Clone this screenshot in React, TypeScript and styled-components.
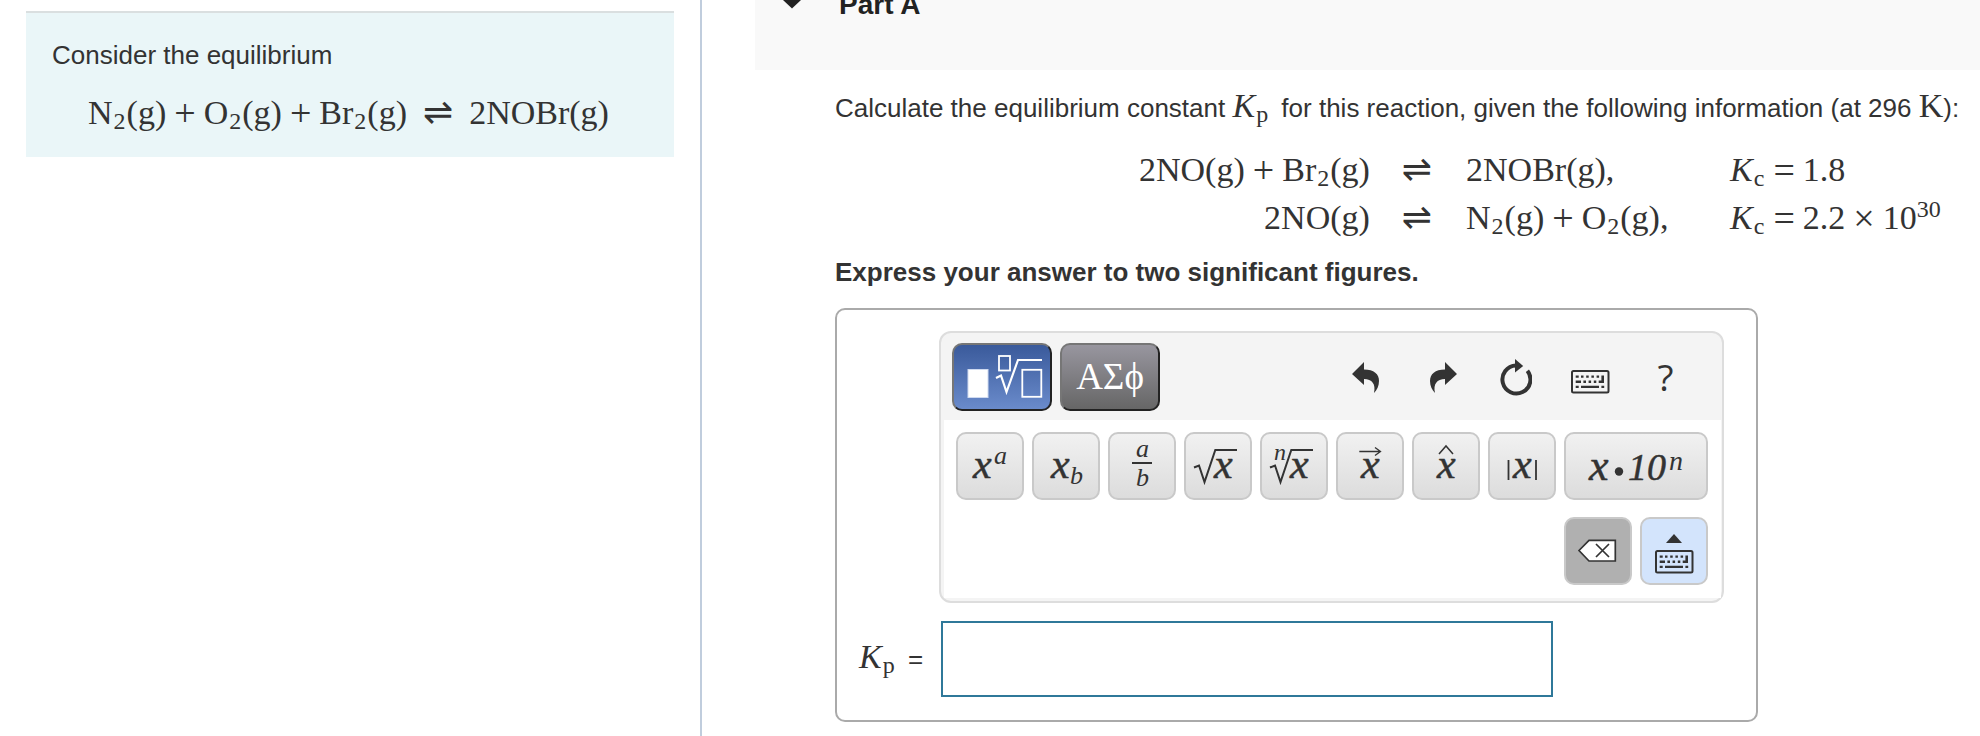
import React from "react";
import styled, { createGlobalStyle } from "styled-components";

const INK = "#333";
const SERIF = '"Liberation Serif", "Times New Roman", serif';

const GlobalStyle = createGlobalStyle`
  *, *::before, *::after { box-sizing: border-box; }
  body {
    margin: 0;
    background: #fff;
    color: ${INK};
    font-family: "Liberation Sans", Arial, sans-serif;
    font-size: 26px;
    line-height: 36px;
  }
  button { font: inherit; color: inherit; cursor: pointer; }
  p { margin: 0; }
  svg { display: block; }
`;

/* ---------- page structure ---------- */

const Page = styled.div`
  display: flex;
  min-height: 100vh;
`;

const Sidebar = styled.aside`
  flex: 0 0 702px;
  padding: 11px 26px 0;
  border-right: 2px solid #c0cddd;

  @media (max-width: 1600px) {
    flex-basis: 36%;
  }
`;

const ProblemCard = styled.section`
  background: #eaf6f8;
  border-top: 2px solid #dadfe0;
  padding: 24px 26px 20px;
`;

const ProblemEquation = styled.div`
  padding: 16px 0 0 36px;
`;

const Main = styled.main`
  flex: 1;
  min-width: 0;
  padding-left: 53px;
`;

const PartHeader = styled.header`
  display: flex;
  align-items: flex-start;
  gap: 38px;
  height: 70px;
  padding-left: 28px;
  overflow: hidden;
  background: #f9f9f9;
  color: #222;
`;

const PartTitle = styled.h2`
  margin: -13px 0 0;
  font-size: 28px;
  line-height: 36px;
`;

const PartBody = styled.div`
  padding: 18px 0 12px 80px;
`;

const Question = styled.p`
  line-height: 40px;
  white-space: nowrap;
`;

const Instruction = styled.p`
  padding: 12px 0 18px;
  font-weight: bold;
`;

/* ---------- formulas ---------- */

const Formula = styled.span`
  display: block;
  font-family: ${SERIF};
  font-size: 34px;
  line-height: 48px;
  white-space: nowrap;
`;

const InlineSymbol = styled.span`
  font-family: ${SERIF};
  font-size: 34px;
  line-height: 0;
`;

const KpSymbol = styled(InlineSymbol)`
  margin-right: 5px;
`;

const Sub = styled.sub`
  font-size: 24px;
  line-height: 0;
  vertical-align: -5px;
  margin: 0 1px;
`;

const Sup = styled.sup`
  font-size: 24px;
  line-height: 0;
  vertical-align: 12px;
`;

const Operator = styled.span`
  margin: 0 8px;
  font-size: 38px;
  line-height: 0;
  vertical-align: -2px;
`;

const Harpoons = styled.span`
  font-family: "DejaVu Sans", sans-serif;
  font-size: 36px;
  line-height: 0;
  margin: 0 16px;
`;

const Reactions = styled.table`
  margin: 18px 0 0 304px;
  border-collapse: collapse;

  td { padding: 0; }
  td:first-child { text-align: right; }
  td:nth-child(2) { padding: 0 18px 0 16px; }
  td:nth-child(3) { min-width: 264px; }
`;

/* ---------- answer area ---------- */

const AnswerBox = styled.form`
  max-width: 923px;
  padding: 21px 32px 23px 0;
  border: 2px solid #aaa;
  border-radius: 10px;
`;

const Editor = styled.div`
  margin-left: 102px;
  padding: 0 1px 3px 3px;
  border: 2px solid #ddd;
  border-radius: 12px;
  background: #f4f4f4;
`;

const EditorBar = styled.div`
  display: flex;
  justify-content: space-between;
  height: 87px;
  padding: 10px 18px 9px 8px;
`;

const Group = styled.div`
  display: flex;
  gap: 8px;
`;

const Palette = styled.button<{ $active?: boolean }>`
  display: flex;
  align-items: center;
  justify-content: center;
  width: 100px;
  height: 68px;
  padding: 0;
  border: 2px solid;
  border-color: #767676 #222 #222 #767676;
  border-radius: 10px;
  color: #fff;
  font-family: ${SERIF};
  font-size: 37px;
  background: ${(p) =>
    p.$active
      ? "linear-gradient(#3a5a9b, #6a8bcb)"
      : "linear-gradient(#98969f, #666)"};
`;

const Tools = styled.div`
  display: flex;
`;

const Tool = styled.button`
  display: flex;
  align-items: center;
  justify-content: center;
  width: 75px;
  height: 68px;
  padding: 0;
  border: 0;
  background: none;
  font-family: "Open Sans", sans-serif;
  font-size: 37px;
`;

const KeyPad = styled.div`
  display: flex;
  flex-wrap: wrap;
  gap: 17px 8px;
  padding: 12px 13px 13px 12px;
  background: #fff;
`;

const KeyRow = styled.div<{ $end?: boolean }>`
  display: flex;
  gap: 8px;
  width: 100%;
  justify-content: ${(p) => (p.$end ? "flex-end" : "flex-start")};
`;

const keyFill = {
  plain: "linear-gradient(#f1f1f1, #dcdcdc)",
  erase: "#b0b0b0",
  toggle: "#d3e4fc",
};

const Key = styled.button<{ $wide?: boolean; $tone?: keyof typeof keyFill }>`
  flex: none;
  width: ${(p) => (p.$wide ? 144 : 68)}px;
  height: 68px;
  padding: 0;
  border: 2px solid #c9c9c9;
  border-radius: 10px;
  background: ${(p) => keyFill[p.$tone ?? "plain"]};
`;

const KeyArt = styled.svg`
  width: 100%;
  height: 64px;
  fill: ${INK};
  font-family: ${SERIF};
  font-style: italic;
`;

const AnswerRow = styled.div`
  display: flex;
  align-items: center;
  padding-top: 18px;
`;

const AnswerLabel = styled.label`
  width: 104px;
  padding-left: 22px;
  white-space: nowrap;
`;

const AnswerInput = styled.input`
  flex: 0 1 612px;
  min-width: 0;
  height: 76px;
  padding: 0 16px;
  border: 2px solid #2f7899;
  background: #fff;
  color: inherit;
  font: inherit;
  outline: none;
`;

/* ---------- symbols and icons ---------- */

const Kp = () => (
  <KpSymbol>
    <i>K</i>
    <Sub>p</Sub>
  </KpSymbol>
);

const Kc = () => (
  <>
    <i>K</i>
    <Sub>c</Sub>
  </>
);

const Plus = () => <Operator>+</Operator>;

const KeyboardShape = () => (
  <>
    <rect x="1" y="1" width="36.5" height="21.6" rx="1.5" fill="none" stroke={INK} strokeWidth="2" />
    <path
      fill={INK}
      d="M4.7 5.5h3v2.3h-3zM10 5.5h2.5v2.3H10zM15.2 5.5h2.5v2.3h-2.5zM20.4 5.5h2.5v2.3h-2.5zM25.6 5.5h2.5v2.3h-2.5zM30.4 5.5H33V13h-5.3v-2.4h2.7zM4.7 10.6H10V13H4.7zM12.4 10.6H15V13h-2.6zM17.6 10.6h2.5V13h-2.5zM22.8 10.6h2.5V13h-2.5zM4.7 15.7h3V18h-3zM10 15.7h18V18H10zM30.4 15.7h2.8V18h-2.8z"
    />
  </>
);

const ARROW = "M0 12L12 0V7.5C22 7.5 27 12 27 19C27 24 25 28 22 31C24 22 20 17 12 17V23Z";

const TemplateIcon = () => (
  <svg width="82" height="44" viewBox="-6 0 82 44" fill="none" stroke="#fff">
    <rect x="1" y="14.5" width="20" height="28" fill="#fff" stroke="#cfdaf0" />
    <rect x="32" y="1" width="11" height="14.5" strokeWidth="1.8" />
    <rect x="55.3" y="14.8" width="19" height="27" strokeWidth="1.8" />
    <path d="M29 23L34 20.5L39.5 37L51 5H75" strokeWidth="2.2" />
  </svg>
);

const X = ({ x }: { x: number }) => (
  <text x={x} y="44" fontSize="42" stroke={INK} strokeWidth="0.5">
    x
  </text>
);

const stroke = { fill: "none", stroke: INK, strokeWidth: 2 };

export default function App() {
  return (
    <Page>
      <GlobalStyle />
      <Sidebar>
        <ProblemCard>
          <p>Consider the equilibrium</p>
          <ProblemEquation>
            <Formula>
              N<Sub>2</Sub>(g)
              <Plus />O<Sub>2</Sub>(g)
              <Plus />
              Br<Sub>2</Sub>(g)
              <Harpoons>⇌</Harpoons>
              2NOBr(g)
            </Formula>
          </ProblemEquation>
        </ProblemCard>
      </Sidebar>

      <Main>
        <PartHeader>
          <svg width="18" height="9" viewBox="0 0 18 9" fill="#222">
            <path d="M0 0H18L9 8.5Z" />
          </svg>
          <PartTitle>Part A</PartTitle>
        </PartHeader>

        <PartBody>
          <Question>
            Calculate the equilibrium constant <Kp /> for this reaction, given the following
            information (at 296 <InlineSymbol>K</InlineSymbol>):
          </Question>

          <Reactions>
            <tbody>
              <tr>
                <td>
                  <Formula>
                    2NO(g)
                    <Plus />
                    Br<Sub>2</Sub>(g)
                  </Formula>
                </td>
                <td>
                  <Formula>
                    <Harpoons>⇌</Harpoons>
                  </Formula>
                </td>
                <td>
                  <Formula>2NOBr(g),</Formula>
                </td>
                <td>
                  <Formula>
                    <Kc />
                    <Operator>=</Operator>1.8
                  </Formula>
                </td>
              </tr>
              <tr>
                <td>
                  <Formula>2NO(g)</Formula>
                </td>
                <td>
                  <Formula>
                    <Harpoons>⇌</Harpoons>
                  </Formula>
                </td>
                <td>
                  <Formula>
                    N<Sub>2</Sub>(g)
                    <Plus />O<Sub>2</Sub>(g),
                  </Formula>
                </td>
                <td>
                  <Formula>
                    <Kc />
                    <Operator>=</Operator>2.2
                    <Operator>×</Operator>10<Sup>30</Sup>
                  </Formula>
                </td>
              </tr>
            </tbody>
          </Reactions>

          <Instruction>Express your answer to two significant figures.</Instruction>

          <AnswerBox onSubmit={(e) => e.preventDefault()}>
            <Editor>
              <EditorBar>
                <Group>
                  <Palette type="button" $active aria-label="Templates">
                    <TemplateIcon />
                  </Palette>
                  <Palette type="button">ΑΣϕ</Palette>
                </Group>
                <Tools>
                  <Tool type="button" aria-label="Undo">
                    <svg width="27" height="31" viewBox="0 0 27 31" fill={INK}>
                      <path d={ARROW} />
                    </svg>
                  </Tool>
                  <Tool type="button" aria-label="Redo">
                    <svg width="33" height="31" viewBox="-6 0 33 31" fill={INK}>
                      <path d={ARROW} transform="matrix(-1 0 0 1 27 0)" />
                    </svg>
                  </Tool>
                  <Tool type="button" aria-label="Reset">
                    <svg width="32" height="37" viewBox="0 0 32 37">
                      <path d="M27.4 11.8A14 14 0 1 1 16 6.5" fill="none" stroke={INK} strokeWidth="4" />
                      <path d="M15 0L23.2 7L15 13.5Z" fill={INK} />
                    </svg>
                  </Tool>
                  <Tool type="button" aria-label="Keyboard shortcuts">
                    <svg width="39" height="34" viewBox="0 -10 39 34">
                      <KeyboardShape />
                    </svg>
                  </Tool>
                  <Tool type="button">?</Tool>
                </Tools>
              </EditorBar>

              <KeyPad>
                <KeyRow>
                  <Key type="button" aria-label="Superscript">
                    <KeyArt>
                      <X x={15} />
                      <text x="36" y="30" fontSize="26">a</text>
                    </KeyArt>
                  </Key>
                  <Key type="button" aria-label="Subscript">
                    <KeyArt>
                      <X x={17} />
                      <text x="36" y="50" fontSize="26">b</text>
                    </KeyArt>
                  </Key>
                  <Key type="button" aria-label="Fraction">
                    <KeyArt>
                      <text x="26" y="23" fontSize="26">a</text>
                      <path d="M22 29H42" {...stroke} />
                      <text x="26" y="52" fontSize="26">b</text>
                    </KeyArt>
                  </Key>
                  <Key type="button" aria-label="Square root">
                    <KeyArt>
                      <path d="M8 33.5L13 31.5L18.5 48L29.3 16H51" {...stroke} />
                      <X x={28} />
                    </KeyArt>
                  </Key>
                  <Key type="button" aria-label="Nth root">
                    <KeyArt>
                      <text x="12" y="26" fontSize="24">n</text>
                      <path d="M8 33.5L13 31.5L18.5 48L29.3 16H51" {...stroke} />
                      <X x={28} />
                    </KeyArt>
                  </Key>
                  <Key type="button" aria-label="Vector">
                    <KeyArt>
                      <path d="M21.3 17.5H42M37 13.5L42.5 17.5L37 21.5" {...stroke} strokeWidth="1.3" />
                      <X x={23} />
                    </KeyArt>
                  </Key>
                  <Key type="button" aria-label="Unit vector">
                    <KeyArt>
                      <path d="M25 20L32 12L39 20" {...stroke} strokeWidth="1.5" />
                      <X x={23} />
                    </KeyArt>
                  </Key>
                  <Key type="button" aria-label="Absolute value">
                    <KeyArt>
                      <path d="M18.5 26V46M46 26V46" {...stroke} strokeWidth="1.8" />
                      <X x={23} />
                    </KeyArt>
                  </Key>
                  <Key type="button" $wide aria-label="Scientific notation">
                    <KeyArt>
                      <text x="23" y="46" fontSize="44" stroke={INK} strokeWidth="0.5">x</text>
                      <circle cx="53" cy="37.5" r="4.2" />
                      <text x="62" y="46" fontSize="38" stroke={INK} strokeWidth="0.5">10</text>
                      <text x="103" y="36" fontSize="28">n</text>
                    </KeyArt>
                  </Key>
                </KeyRow>
                <KeyRow $end>
                  <Key type="button" $tone="erase" aria-label="Backspace">
                    <KeyArt>
                      <path
                        d="M13 31.5L23 21.3H49.3V42H23Z"
                        fill="#fff"
                        stroke={INK}
                        strokeWidth="1.7"
                      />
                      <path d="M30 25L43 38M43 25L30 38" {...stroke} strokeWidth="1.7" />
                    </KeyArt>
                  </Key>
                  <Key type="button" $tone="toggle" aria-label="Hide keyboard">
                    <KeyArt>
                      <path d="M24 24L32 15L40 24Z" />
                      <g transform="translate(13 31)">
                        <KeyboardShape />
                      </g>
                    </KeyArt>
                  </Key>
                </KeyRow>
              </KeyPad>
            </Editor>

            <AnswerRow>
              <AnswerLabel htmlFor="kp-answer">
                <Kp /> =
              </AnswerLabel>
              <AnswerInput id="kp-answer" type="text" />
            </AnswerRow>
          </AnswerBox>
        </PartBody>
      </Main>
    </Page>
  );
}
